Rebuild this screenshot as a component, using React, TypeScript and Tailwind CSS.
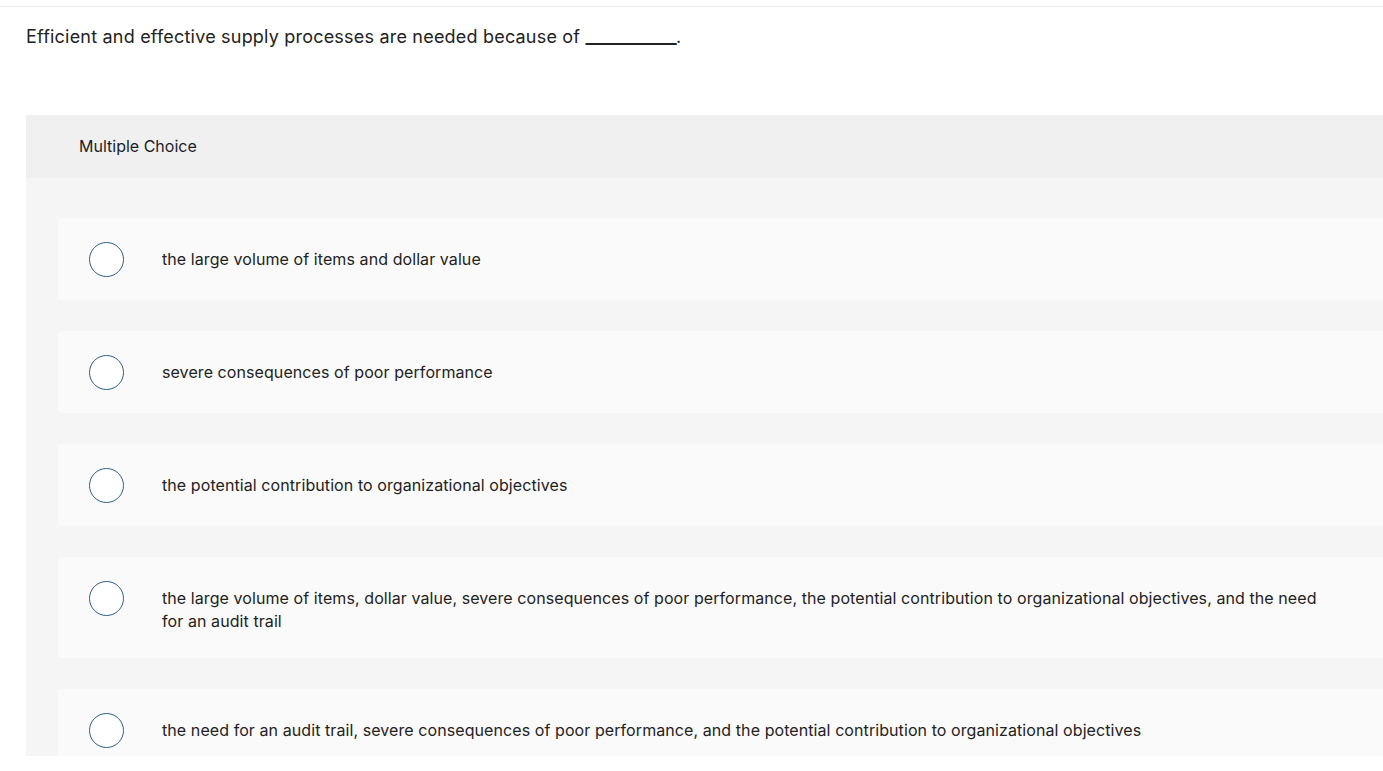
import React from 'react';

const options: string[] = [
  'the large volume of items and dollar value',
  'severe consequences of poor performance',
  'the potential contribution to organizational objectives',
  'the large volume of items, dollar value, severe consequences of poor performance, the potential contribution to organizational objectives, and the need for an audit trail',
  'the need for an audit trail, severe consequences of poor performance, and the potential contribution to organizational objectives',
];

const Radio: React.FC = () => (
  <span className="block shrink-0 w-[35px] h-[35px] rounded-full border-[1.5px] border-[#2f5d8c] bg-white" />
);

const App: React.FC = () => {
  return (
    <div
      className="h-[771px] overflow-hidden bg-white text-[#222]"
      style={{ fontFamily: 'Inter, "Noto Sans", Arial, sans-serif' }}
    >
      <div className="pt-[6px]">
        <div className="border-t border-[#ececec]" />
      </div>

      <div className="h-[749px] overflow-hidden">
        <p className="pl-[26px] pt-[18px] text-[18px] leading-[24px] tracking-[0.2px] text-[#222]">
          Efficient and effective supply processes are needed because of{' '}
          <span className="text-[24px] leading-[0] tracking-[-0.9px]">_________</span>.
        </p>

        <div className="mt-[66px] ml-[26px] bg-[#f5f5f5]">
          <div className="h-[63px] flex items-center pl-[53px] pb-[1px] bg-[#f0f0f0] text-[16px] text-[#1c1c2a]">
            Multiple Choice
          </div>

          <div className="pt-[40px] pl-[32px] flex flex-col gap-[31px] pb-[40px]">
            {options.map((text, i) => (
              <div
                key={i}
                className="flex items-start bg-[#fafafa] rounded-l-[4px] pl-[31px] pt-[24px] pb-[23px]"
              >
                <Radio />
                <div className="pl-[38px] pr-[53px] pt-[6px] pb-[2px] text-[16px] leading-[23px] tracking-[0.08px] text-[#222]">
                  {text}
                </div>
              </div>
            ))}
          </div>
        </div>
      </div>
    </div>
  );
};

export default App;
